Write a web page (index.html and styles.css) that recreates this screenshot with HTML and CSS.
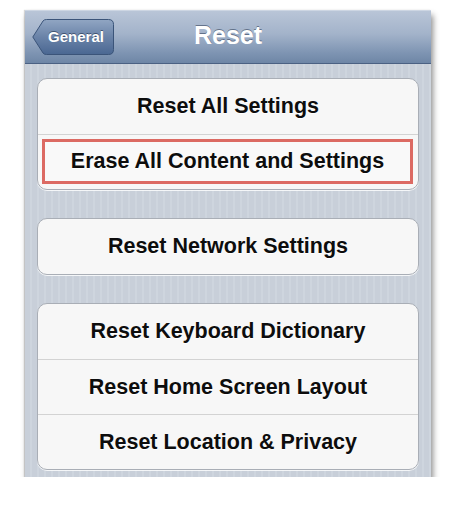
FILE: index.html
```html
<!DOCTYPE html>
<html lang="en">
<head>
<meta charset="utf-8">
<title>Reset</title>
<link rel="stylesheet" href="styles.css">
</head>
<body>
<div class="stage">
  <div class="phone">
    <header class="navbar">
      <div class="nav-left">
        <button class="back-btn" type="button">
          <svg class="back-shape" width="82" height="36" viewBox="0 0 82 36" aria-hidden="true">
            <defs>
              <linearGradient id="backFill" x1="0" y1="0" x2="0" y2="1">
                <stop offset="0" stop-color="#91a6c3"/>
                <stop offset="0.5" stop-color="#6a83a8"/>
                <stop offset="1" stop-color="#4a6792"/>
              </linearGradient>
            </defs>
            <path d="M0.8 18 L11 2 Q12 0.5 14.5 0.5 H76.5 Q81.5 0.5 81.5 5.5 V30.5 Q81.5 35.5 76.5 35.5 H14.5 Q12 35.5 11 34 Z" fill="url(#backFill)" stroke="#3b5479" stroke-width="1"/>
          </svg>
          <span class="back-label">General</span>
        </button>
      </div>
      <h1 class="nav-title">Reset</h1>
      <div class="nav-right"></div>
    </header>

    <main class="content">
      <ul class="group">
        <li class="row">Reset All Settings</li>
        <li class="row row-flagged"><span class="flag-box">Erase All Content and Settings</span></li>
      </ul>
      <ul class="group">
        <li class="row">Reset Network Settings</li>
      </ul>
      <ul class="group">
        <li class="row">Reset Keyboard Dictionary</li>
        <li class="row">Reset Home Screen Layout</li>
        <li class="row">Reset Location &amp; Privacy</li>
      </ul>
    </main>
  </div>
</div>
</body>
</html>
```

FILE: styles.css
```css
html, body {
  margin: 0;
  padding: 0;
  background: #ffffff;
}

body {
  font-family: "Liberation Sans", Arial, sans-serif;
}

.stage {
  padding: 10px 0 0 25px;
}

.phone {
  width: 406px;
  height: 467px;
  overflow: hidden;
  display: flex;
  flex-direction: column;
  box-shadow: 2px 5px 6px rgba(0, 0, 0, 0.45), -1px 0 1px rgba(0, 0, 0, 0.15);
}

/* Navigation bar */
.navbar {
  height: 53px;
  flex: none;
  display: grid;
  grid-template-columns: 1fr auto 1fr;
  align-items: center;
  background: linear-gradient(#bac6d8 0%, #a3b3ca 45%, #7f95b3 80%, #6e86a6 100%);
  border-bottom: 1px solid #4b6183;
  box-shadow: inset 0 1px 0 #cdd6e3;
}

.nav-left {
  padding-left: 7px;
  display: flex;
}

.back-btn {
  display: grid;
  width: 82px;
  height: 36px;
  padding: 0;
  margin: 0;
  border: 0;
  background: none;
  font: inherit;
}

.back-shape,
.back-label {
  grid-area: 1 / 1;
}

.back-label {
  align-self: center;
  justify-self: center;
  padding-left: 6px;
  color: #ffffff;
  font-weight: bold;
  font-size: 15px;
  text-shadow: 0 -1px 0 rgba(30, 45, 70, 0.6);
}

.nav-title {
  margin: 0;
  color: #ffffff;
  font-size: 25px;
  font-weight: bold;
  text-shadow: 0 -1px 0 rgba(40, 55, 80, 0.55);
  padding-bottom: 2px;
}

/* Grouped table */
.content {
  flex: 1;
  padding: 14px 12px 0;
  display: flex;
  flex-direction: column;
  gap: 28px;
  background: repeating-linear-gradient(90deg, #c8cfd9 0 5px, #ced5de 5px 7px);
}

.group {
  list-style: none;
  margin: 0;
  padding: 0;
  background: #f7f7f7;
  border: 1px solid #a9aeb6;
  border-radius: 10px;
  box-shadow: 0 1px 0 rgba(255, 255, 255, 0.8);
  overflow: hidden;
}

.row {
  height: 55px;
  box-sizing: border-box;
  display: flex;
  align-items: center;
  justify-content: center;
  font-size: 21.5px;
  font-weight: bold;
  color: #0d0d0d;
  text-shadow: 0 1px 0 #ffffff;
}

.row + .row {
  border-top: 1px solid #d3d3d3;
}

.row-flagged {
  padding: 4px 5px 5px 4px;
  align-items: stretch;
}

.flag-box {
  flex: 1;
  display: flex;
  align-items: center;
  justify-content: center;
  border: 3px solid #dc6a63;
  background: #f9f9f9;
}
```
